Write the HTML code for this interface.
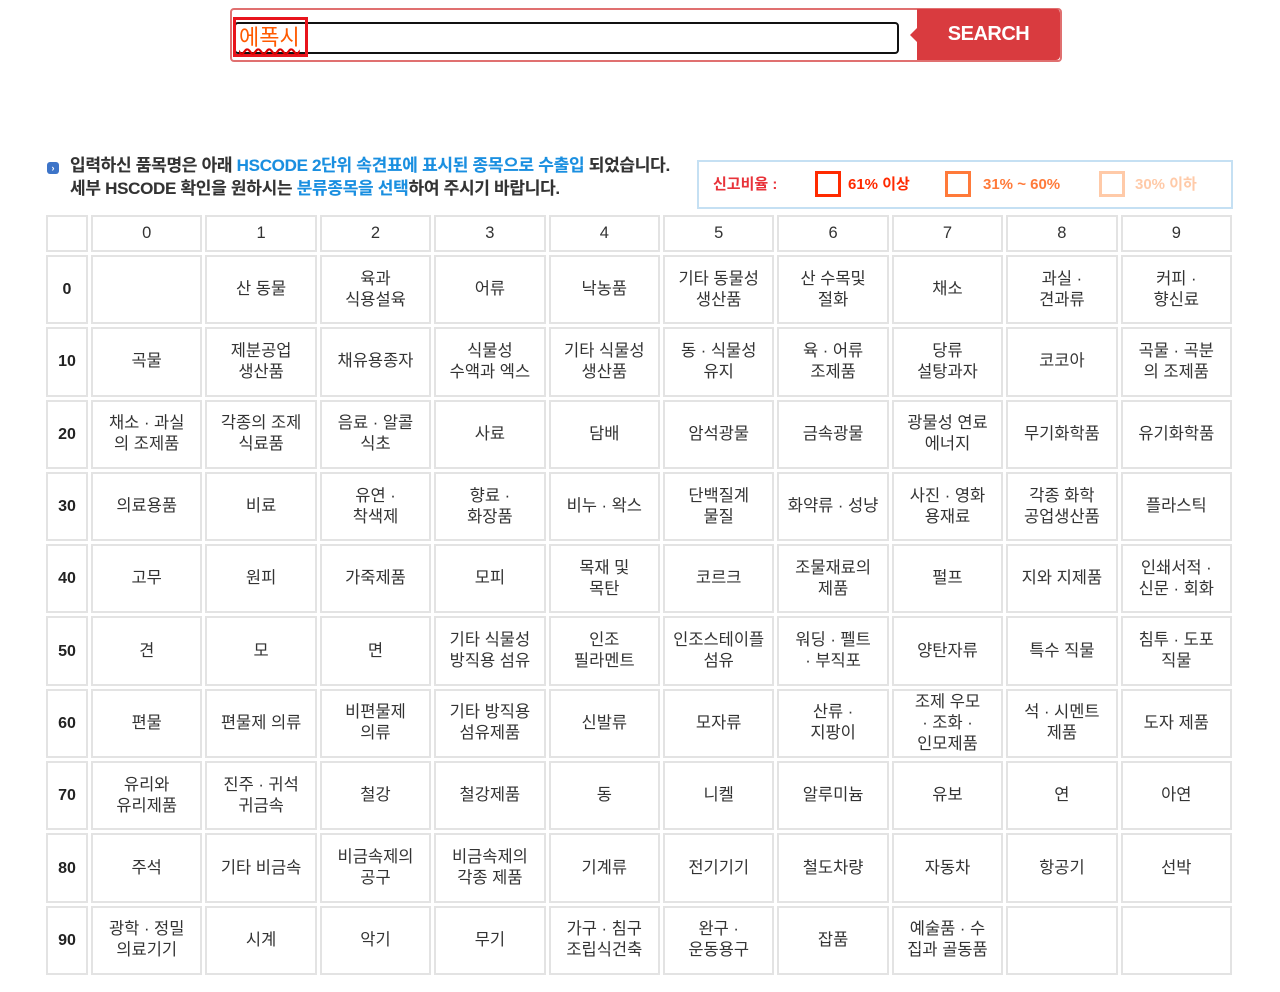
<!DOCTYPE html>
<html><head><meta charset="utf-8"><style>
body{margin:0;width:1280px;height:992px;background:#fff;font-family:"Liberation Sans","Noto Sans CJK KR",sans-serif;position:relative;overflow:hidden}
.abs{position:absolute}
#sb{left:230px;top:8px;width:828px;height:50px;border:2px solid #e07070;border-radius:4px;background:#fff}
#inp{left:234px;top:22px;width:661px;height:28px;border:2px solid #111;border-radius:4px}
#hl{left:233px;top:17px;width:66px;height:34px;border:3px solid #e8141c;color:#ff5a00;font-size:22px;line-height:36px;padding-left:3px;text-decoration:underline wavy #d00;text-underline-offset:3px}
#btn{left:917px;top:9px;width:143px;height:51px;background:#d93b3f;border-radius:0 4px 4px 0;color:#fff;font-weight:bold;font-size:20px;line-height:51px;text-align:center;letter-spacing:-0.5px}
#btn:before{content:"";position:absolute;left:-7px;top:19px;border-top:7px solid transparent;border-bottom:7px solid transparent;border-right:7px solid #d93b3f}
#info{left:70px;top:154px;font-size:17px;line-height:23px;color:#333;letter-spacing:-0.3px;font-weight:bold;-webkit-text-stroke:0.1px}
#info span{font-weight:normal}
#info b{color:#1a8fe0;font-weight:bold}
#ico{left:47px;top:162px;width:12px;height:12px;border-radius:3px;background:#3d74c8;color:#fff;font-size:9px;line-height:12px;text-align:center;font-weight:bold}
#leg{left:697px;top:160px;width:532px;height:45px;border:2px solid #c5e0f3;font-weight:bold;font-size:15px}
.sq{position:absolute;top:9px;width:20px;height:20px;border:3px solid}
.lt{position:absolute;top:14px;line-height:18px}
#g{left:46px;top:215px;width:1186px;display:grid;grid-template-columns:42px repeat(10,1fr);grid-template-rows:37px repeat(10,69.3px);gap:3px}
#g div{border:2px solid #e3e3e3;display:flex;align-items:center;justify-content:center;text-align:center;font-size:16.5px;line-height:21px;color:#333}
#g div.n{font-weight:bold;color:#222;font-size:16px}
</style></head><body>
<div id="sb" class="abs"></div>
<div id="inp" class="abs"></div>
<div id="hl" class="abs">에폭시</div>
<div id="btn" class="abs">SEARCH</div>
<div id="ico" class="abs">›</div>
<div id="info" class="abs">입력하신 품목명은 아래 <b>HSCODE 2단위 속견표에 표시된 종목으로 수출입</b> 되었습니다.<br>세부 HSCODE 확인을 원하시는 <b>분류종목을 선택</b>하여 주시기 바랍니다.</div>
<div id="leg" class="abs">
<span class="lt" style="left:14px;color:#e8333a">신고비율 :</span>
<span class="sq" style="left:116px;border-color:#ff2a00"></span><span class="lt" style="left:149px;color:#ff2a00">61% 이상</span>
<span class="sq" style="left:246px;border-color:#ff7a3a"></span><span class="lt" style="left:284px;color:#ff7a3a">31% ~ 60%</span>
<span class="sq" style="left:400px;border-color:#ffcaa8"></span><span class="lt" style="left:436px;color:#ffcaa8">30% 이하</span>
</div>
<div id="g" class="abs">
<div></div><div>0</div><div>1</div><div>2</div><div>3</div><div>4</div><div>5</div><div>6</div><div>7</div><div>8</div><div>9</div>
<div class="n">0</div><div></div><div>산 동물</div><div>육과<br>식용설육</div><div>어류</div><div>낙농품</div><div>기타 동물성<br>생산품</div><div>산 수목및<br>절화</div><div>채소</div><div>과실 ·<br>견과류</div><div>커피 ·<br>향신료</div>
<div class="n">10</div><div>곡물</div><div>제분공업<br>생산품</div><div>채유용종자</div><div>식물성<br>수액과 엑스</div><div>기타 식물성<br>생산품</div><div>동 · 식물성<br>유지</div><div>육 · 어류<br>조제품</div><div>당류<br>설탕과자</div><div>코코아</div><div>곡물 · 곡분<br>의 조제품</div>
<div class="n">20</div><div>채소 · 과실<br>의 조제품</div><div>각종의 조제<br>식료품</div><div>음료 · 알콜<br>식초</div><div>사료</div><div>담배</div><div>암석광물</div><div>금속광물</div><div>광물성 연료<br>에너지</div><div>무기화학품</div><div>유기화학품</div>
<div class="n">30</div><div>의료용품</div><div>비료</div><div>유연 ·<br>착색제</div><div>향료 ·<br>화장품</div><div>비누 · 왁스</div><div>단백질계<br>물질</div><div>화약류 · 성냥</div><div>사진 · 영화<br>용재료</div><div>각종 화학<br>공업생산품</div><div>플라스틱</div>
<div class="n">40</div><div>고무</div><div>원피</div><div>가죽제품</div><div>모피</div><div>목재 및<br>목탄</div><div>코르크</div><div>조물재료의<br>제품</div><div>펄프</div><div>지와 지제품</div><div>인쇄서적 ·<br>신문 · 회화</div>
<div class="n">50</div><div>견</div><div>모</div><div>면</div><div>기타 식물성<br>방직용 섬유</div><div>인조<br>필라멘트</div><div>인조스테이플<br>섬유</div><div>워딩 · 펠트<br>· 부직포</div><div>양탄자류</div><div>특수 직물</div><div>침투 · 도포<br>직물</div>
<div class="n">60</div><div>편물</div><div>편물제 의류</div><div>비편물제<br>의류</div><div>기타 방직용<br>섬유제품</div><div>신발류</div><div>모자류</div><div>산류 ·<br>지팡이</div><div>조제 우모<br>· 조화 ·<br>인모제품</div><div>석 · 시멘트<br>제품</div><div>도자 제품</div>
<div class="n">70</div><div>유리와<br>유리제품</div><div>진주 · 귀석<br>귀금속</div><div>철강</div><div>철강제품</div><div>동</div><div>니켈</div><div>알루미늄</div><div>유보</div><div>연</div><div>아연</div>
<div class="n">80</div><div>주석</div><div>기타 비금속</div><div>비금속제의<br>공구</div><div>비금속제의<br>각종 제품</div><div>기계류</div><div>전기기기</div><div>철도차량</div><div>자동차</div><div>항공기</div><div>선박</div>
<div class="n">90</div><div>광학 · 정밀<br>의료기기</div><div>시계</div><div>악기</div><div>무기</div><div>가구 · 침구<br>조립식건축</div><div>완구 ·<br>운동용구</div><div>잡품</div><div>예술품 · 수<br>집과 골동품</div><div></div><div></div>
</div>
</body></html>
